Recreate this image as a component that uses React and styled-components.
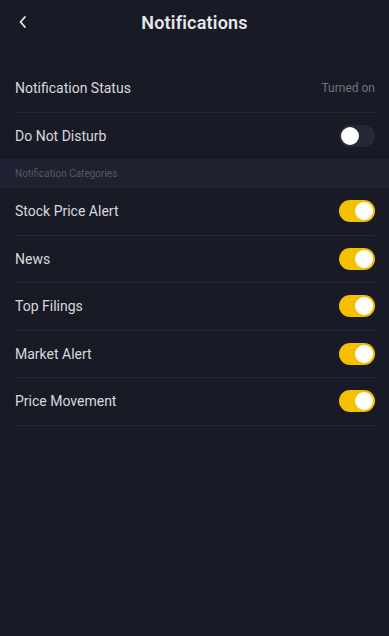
import React, { useState } from "react";
import styled, { createGlobalStyle } from "styled-components";

const GlobalStyle = createGlobalStyle`
  html, body {
    margin: 0;
    padding: 0;
    background: #181a25;
  }
  body {
    font-family: Roboto, "Liberation Sans", sans-serif;
  }
`;

const Page = styled.div`
  width: 389px;
  min-height: 636px;
  background: #181a25;
  color: #d8d9df;
`;

const Header = styled.div`
  height: 44px;
  display: flex;
  align-items: center;
  justify-content: center;
  position: relative;
  margin-bottom: 21px;
`;

const Back = styled.button`
  position: absolute;
  left: 12px;
  top: 11px;
  width: 22px;
  height: 22px;
  background: transparent;
  border: none;
  padding: 0;
  display: flex;
  align-items: center;
  justify-content: center;
`;

const Title = styled.h1`
  margin: 0;
  font-size: 18px;
  font-weight: 600;
  color: #e6e7ec;
  letter-spacing: 0.2px;
`;

const List = styled.div`
  padding: 0 14px 0 15px;
`;

const Row = styled.div`
  height: 46.5px;
  display: flex;
  align-items: center;
  justify-content: space-between;
  border-bottom: ${(p) => (p.$last ? "none" : "1px solid #242632")};
  font-size: 14px;
  color: #d8d9df;
`;

const Value = styled.span`
  font-size: 12px;
  color: #6f727d;
`;

const Section = styled.div`
  height: 29px;
  background: #1e2130;
  display: flex;
  align-items: center;
  padding: 0 15px;
  font-size: 10px;
  color: #555968;
`;

const Track = styled.button`
  width: 36px;
  height: 22px;
  border-radius: 11px;
  border: none;
  padding: 2px;
  display: flex;
  justify-content: ${(p) => (p.$on ? "flex-end" : "flex-start")};
  align-items: center;
  background: ${(p) => (p.$on ? "#f5c000" : "#262833")};
  cursor: pointer;
`;

const Knob = styled.span`
  width: 18px;
  height: 18px;
  border-radius: 50%;
  background: #ffffff;
`;

function Toggle({ on, onClick }) {
  return (
    <Track $on={on} onClick={onClick}>
      <Knob />
    </Track>
  );
}

const categories = [
  "Stock Price Alert",
  "News",
  "Top Filings",
  "Market Alert",
  "Price Movement",
];

export default function App() {
  const [dnd, setDnd] = useState(false);
  const [cats, setCats] = useState(categories.map(() => true));

  return (
    <Page>
      <GlobalStyle />
      <Header>
        <Back>
          <svg width="12" height="14" viewBox="0 0 12 14" fill="none">
            <path d="M8 2 L3.5 7 L8 12" stroke="#e6e7ec" strokeWidth="1.8" strokeLinecap="round" strokeLinejoin="round" />
          </svg>
        </Back>
        <Title>Notifications</Title>
      </Header>
      <List>
        <Row>
          <span>Notification Status</span>
          <Value>Turned on</Value>
        </Row>
        <Row $last>
          <span>Do Not Disturb</span>
          <Toggle on={dnd} onClick={() => setDnd(!dnd)} />
        </Row>
      </List>
      <Section>Notification Categories</Section>
      <List>
        {categories.map((c, i) => (
          <Row key={c}>
            <span>{c}</span>
            <Toggle
              on={cats[i]}
              onClick={() => setCats(cats.map((v, j) => (j === i ? !v : v)))}
            />
          </Row>
        ))}
      </List>
    </Page>
  );
}
